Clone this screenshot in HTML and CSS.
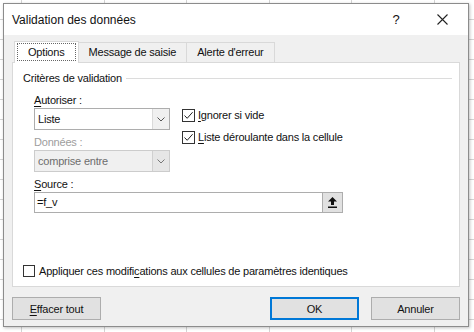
FILE: index.html
```html
<!DOCTYPE html>
<html lang="fr">
<head>
    <meta charset="UTF-8">
    <title>Validation des données</title>
    <link rel="stylesheet" href="styles.css">
</head>
<body>
    <div class="dialog">
        <div class="titlebar">
            <span class="title">Validation des données</span>
            <span class="help">?</span>
            <span class="close">
                <svg width="11" height="11" viewBox="0 0 11 11"><path d="M0.5 0.5 L10.5 10.5 M10.5 0.5 L0.5 10.5" stroke="#222" stroke-width="1.1" fill="none"/></svg>
            </span>
        </div>

        <div class="content">
            <div class="tabs">
                <div class="tab active"><span class="focus">Options</span></div>
                <div class="tab">Message de saisie</div>
                <div class="tab">Alerte d'erreur</div>
            </div>

            <div class="panel">
                <div class="group-head">
                    <span>Critères de validation</span>
                    <div class="group-line"></div>
                </div>

                <div class="criteria">
                    <div class="col-left">
                        <div class="label"><u>A</u>utoriser :</div>
                        <div class="select">
                            <span class="select-value">Liste</span>
                            <span class="select-btn">
                                <svg width="8" height="5" viewBox="0 0 8 5"><path d="M0.5 0.5 L4 4 L7.5 0.5" stroke="#555" fill="none"/></svg>
                            </span>
                        </div>
                        <div class="label disabled">Données :</div>
                        <div class="select is-disabled">
                            <span class="select-value">comprise entre</span>
                            <span class="select-btn">
                                <svg width="8" height="5" viewBox="0 0 8 5"><path d="M0.5 0.5 L4 4 L7.5 0.5" stroke="#777" fill="none"/></svg>
                            </span>
                        </div>
                    </div>
                    <div class="col-right">
                        <label class="check">
                            <span class="box checked"><svg width="11" height="11" viewBox="0 0 11 11"><path d="M1.5 5.5 L4.2 8.3 L9.6 2.2" stroke="#222" stroke-width="1" fill="none"/></svg></span>
                            <span><u>I</u>gnorer si vide</span>
                        </label>
                        <label class="check">
                            <span class="box checked"><svg width="11" height="11" viewBox="0 0 11 11"><path d="M1.5 5.5 L4.2 8.3 L9.6 2.2" stroke="#222" stroke-width="1" fill="none"/></svg></span>
                            <span><u>L</u>iste déroulante dans la cellule</span>
                        </label>
                    </div>
                </div>

                <div class="source">
                    <div class="label"><u>S</u>ource :</div>
                    <div class="source-input">
                        <span class="source-value">=f_v</span>
                        <span class="source-btn">
                            <svg width="9" height="11" viewBox="0 0 9 11"><path d="M4.5 0 L9 4.5 L6 4.5 L6 8 L3 8 L3 4.5 L0 4.5 Z" fill="#111"/><rect x="0" y="9.5" width="9" height="1.5" fill="#111"/></svg>
                        </span>
                    </div>
                </div>

                <label class="check apply">
                    <span class="box"></span>
                    <span>Appliquer ces modifi<u>c</u>ations aux cellules de paramètres identiques</span>
                </label>
            </div>

            <div class="buttons">
                <button class="btn"><u>E</u>ffacer tout</button>
                <div class="spacer"></div>
                <button class="btn default">OK</button>
                <button class="btn">Annuler</button>
            </div>
        </div>
    </div>
</body>
</html>
```

FILE: styles.css
```css
* {
    margin: 0;
    padding: 0;
    box-sizing: border-box;
}

body {
    width: 474px;
    height: 332px;
    overflow: hidden;
    font-family: 'Liberation Sans', Arial, sans-serif;
    font-size: 11px;
    letter-spacing: -0.2px;
    color: #111;
    background-color: #fff;
    background-image:
        repeating-linear-gradient(90deg, transparent 0, transparent 21px, #d4d4d4 21px, #d4d4d4 22px, transparent 22px, transparent 82.6px),
        repeating-linear-gradient(180deg, transparent 0, transparent 19px, #d4d4d4 19px, #d4d4d4 20px);
    padding: 3px 0 0 3px;
}

u {
    text-decoration: underline;
    text-underline-offset: 2px;
}

.dialog {
    width: 466px;
    height: 324px;
    border: 1px solid #8c8c8c;
    background: #f0f0f0;
    display: flex;
    flex-direction: column;
    box-shadow: 1px 1px 3px rgba(0, 0, 0, 0.25);
}

.titlebar {
    height: 31px;
    background: #fff;
    display: flex;
    align-items: center;
    padding-left: 8px;
}

.title {
    font-size: 12px;
    letter-spacing: 0;
    flex: 1;
}

.help {
    font-size: 13px;
    width: 20px;
    margin-right: 31px;
    text-align: center;
}

.close {
    width: 11px;
    height: 11px;
    margin-right: 20px;
    display: flex;
}

.content {
    flex: 1;
    padding: 6px 0 0 8px;
    display: flex;
    flex-direction: column;
}

.tabs {
    display: flex;
    height: 21px;
    align-items: flex-end;
    padding-left: 2px;
}

.tab {
    height: 20px;
    padding: 0 10px;
    border: 1px solid #d9d9d9;
    border-bottom: none;
    border-left: none;
    background: #f0f0f0;
    line-height: 18px;
}

.tab.active {
    height: 22px;
    margin-bottom: -1px;
    background: #fff;
    border-left: 1px solid #d9d9d9;
    padding: 1px 2px 0 2px;
    position: relative;
    z-index: 1;
}

.focus {
    display: block;
    border: 1px dotted #666;
    padding: 0 10px;
    line-height: 16px;
}

.panel {
    width: 448px;
    height: 225px;
    background: #fff;
    border: 1px solid #d9d9d9;
    padding: 7px 0 0 10px;
    display: flex;
    flex-direction: column;
}

.group-head {
    display: flex;
    align-items: center;
    height: 16px;
    line-height: 16px;
    padding-right: 7px;
}

.group-line {
    flex: 1;
    height: 1px;
    background: #dcdcdc;
    margin-left: 4px;
}

.criteria {
    display: flex;
    margin-left: 11px;
    margin-top: 6px;
}

.col-left {
    width: 136px;
}

.label {
    height: 16px;
    line-height: 16px;
}

.label.disabled {
    color: #9d9d9d;
    margin-top: 4px;
}

.select {
    height: 22px;
    border: 1px solid #adadad;
    background: #fff;
    display: flex;
    align-items: stretch;
}

.select-value {
    flex: 1;
    padding-left: 3px;
    line-height: 20px;
}

.select-btn {
    width: 17px;
    background: #f0f0f0;
    border-left: 1px solid #dadada;
    display: flex;
    align-items: center;
    justify-content: center;
}

.select.is-disabled {
    background: #f0f0f0;
    border-color: #cccccc;
    color: #6d6d6d;
}

.select.is-disabled .select-btn {
    background: #e6e6e6;
    border-left-color: #d0d0d0;
}

.col-right {
    margin-left: 12px;
    padding-top: 17px;
    display: flex;
    flex-direction: column;
    gap: 9px;
}

.check {
    display: flex;
    align-items: center;
    gap: 3px;
    height: 13px;
    line-height: 13px;
}

.box {
    width: 13px;
    height: 13px;
    border: 1px solid #333;
    background: #fff;
    display: flex;
    align-items: center;
    justify-content: center;
    flex-shrink: 0;
}

.source {
    margin-left: 11px;
    margin-top: 4px;
}

.source-input {
    width: 309px;
    height: 21px;
    border: 1px solid #adadad;
    display: flex;
}

.source-value {
    flex: 1;
    padding-left: 2px;
    line-height: 19px;
}

.source-btn {
    width: 20px;
    background: #e1e1e1;
    border-left: 1px solid #adadad;
    display: flex;
    align-items: center;
    justify-content: center;
}

.apply {
    margin-top: 52px;
    gap: 4px;
    height: 12px;
}

.apply .box {
    width: 12px;
    height: 12px;
}

.buttons {
    display: flex;
    margin-top: 10px;
    padding-right: 8px;
    gap: 12px;
}

.spacer {
    flex: 1;
}

.btn {
    width: 89px;
    height: 23px;
    font: inherit;
    letter-spacing: inherit;
    color: #111;
    background: #e1e1e1;
    border: 1px solid #adadad;
}

.btn.default {
    border-color: #0078d7;
    box-shadow: inset 0 0 0 1px #0078d7;
}
```
